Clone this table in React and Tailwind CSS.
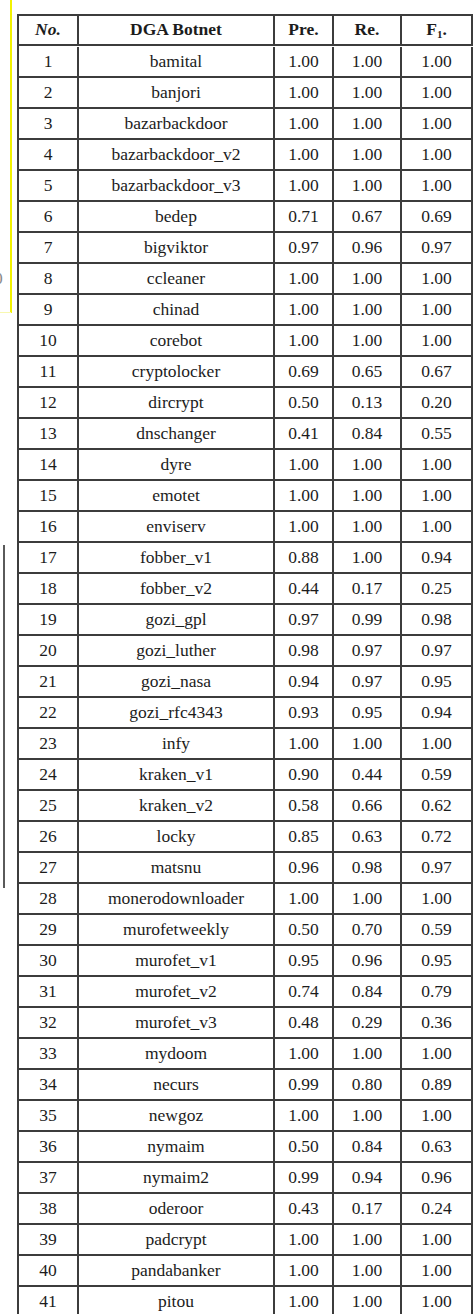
import React from 'react';

const rows = [
  [1, 'bamital', '1.00', '1.00', '1.00'],
  [2, 'banjori', '1.00', '1.00', '1.00'],
  [3, 'bazarbackdoor', '1.00', '1.00', '1.00'],
  [4, 'bazarbackdoor_v2', '1.00', '1.00', '1.00'],
  [5, 'bazarbackdoor_v3', '1.00', '1.00', '1.00'],
  [6, 'bedep', '0.71', '0.67', '0.69'],
  [7, 'bigviktor', '0.97', '0.96', '0.97'],
  [8, 'ccleaner', '1.00', '1.00', '1.00'],
  [9, 'chinad', '1.00', '1.00', '1.00'],
  [10, 'corebot', '1.00', '1.00', '1.00'],
  [11, 'cryptolocker', '0.69', '0.65', '0.67'],
  [12, 'dircrypt', '0.50', '0.13', '0.20'],
  [13, 'dnschanger', '0.41', '0.84', '0.55'],
  [14, 'dyre', '1.00', '1.00', '1.00'],
  [15, 'emotet', '1.00', '1.00', '1.00'],
  [16, 'enviserv', '1.00', '1.00', '1.00'],
  [17, 'fobber_v1', '0.88', '1.00', '0.94'],
  [18, 'fobber_v2', '0.44', '0.17', '0.25'],
  [19, 'gozi_gpl', '0.97', '0.99', '0.98'],
  [20, 'gozi_luther', '0.98', '0.97', '0.97'],
  [21, 'gozi_nasa', '0.94', '0.97', '0.95'],
  [22, 'gozi_rfc4343', '0.93', '0.95', '0.94'],
  [23, 'infy', '1.00', '1.00', '1.00'],
  [24, 'kraken_v1', '0.90', '0.44', '0.59'],
  [25, 'kraken_v2', '0.58', '0.66', '0.62'],
  [26, 'locky', '0.85', '0.63', '0.72'],
  [27, 'matsnu', '0.96', '0.98', '0.97'],
  [28, 'monerodownloader', '1.00', '1.00', '1.00'],
  [29, 'murofetweekly', '0.50', '0.70', '0.59'],
  [30, 'murofet_v1', '0.95', '0.96', '0.95'],
  [31, 'murofet_v2', '0.74', '0.84', '0.79'],
  [32, 'murofet_v3', '0.48', '0.29', '0.36'],
  [33, 'mydoom', '1.00', '1.00', '1.00'],
  [34, 'necurs', '0.99', '0.80', '0.89'],
  [35, 'newgoz', '1.00', '1.00', '1.00'],
  [36, 'nymaim', '0.50', '0.84', '0.63'],
  [37, 'nymaim2', '0.99', '0.94', '0.96'],
  [38, 'oderoor', '0.43', '0.17', '0.24'],
  [39, 'padcrypt', '1.00', '1.00', '1.00'],
  [40, 'pandabanker', '1.00', '1.00', '1.00'],
  [41, 'pitou', '1.00', '1.00', '1.00'],
];

const cell = 'flex items-center justify-center border-r-2 border-b-2 border-[#3c3c3c]';

export default function App() {
  return (
    <div className="bg-white h-[1314px] overflow-hidden flex text-[#1c1c1c] font-['Liberation_Serif',serif] text-[17.5px] leading-none">
      {/* left margin: scan artifacts */}
      <div className="relative w-[17px] shrink-0">
        <div className="absolute left-[10px] top-0 w-[2px] h-[313px] bg-[#f2f200]" />
        <div className="absolute left-0 top-[312px] w-[11px] h-[1px] bg-[#f8f8b0]" />
        <div className="absolute left-[-6px] top-[270px] text-[#8a8a8a]">0</div>
        <div className="absolute left-[3px] top-[545px] w-[2px] h-[343px] bg-[#5a5a5a]" />
      </div>

      <div className="mt-[14px] w-[456px] self-start border-l-2 border-t-2 border-[#3c3c3c] grid grid-cols-[60px_196px_59px_68px_71px] auto-rows-[31px]">
        <div className={`${cell} h-[30px] font-bold italic`}>No.</div>
        <div className={`${cell} h-[30px] font-bold`}>DGA Botnet</div>
        <div className={`${cell} h-[30px] font-bold`}>Pre.</div>
        <div className={`${cell} h-[30px] font-bold`}>Re.</div>
        <div className={`${cell} h-[30px] font-bold`}>
          F<span className="text-[11px] relative top-[4px]">1</span>.
        </div>
        {rows.map(([n, name, pre, re, f1]) => (
          <React.Fragment key={n}>
            <div className={cell}>{n}</div>
            <div className={cell}>{name}</div>
            <div className={cell}>{pre}</div>
            <div className={cell}>{re}</div>
            <div className={cell}>{f1}</div>
          </React.Fragment>
        ))}
      </div>
    </div>
  );
}
